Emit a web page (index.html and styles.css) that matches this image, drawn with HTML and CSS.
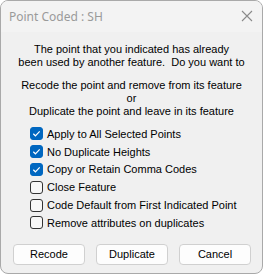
FILE: index.html
```html
<!DOCTYPE html>
<html>
<head>
<meta charset="utf-8">
<link rel="stylesheet" href="styles.css">
</head>
<body>
<div class="window">
  <div class="titlebar">
    <span class="title">Point Coded : SH</span>
    <svg class="close" width="12" height="12" viewBox="0 0 12 12"><path d="M1 1L11 11M11 1L1 11" stroke="#8a8a8a" stroke-width="1.1" fill="none"/></svg>
  </div>
  <div class="content">
    <p class="msg">The point that you indicated has already<br>been used by another feature.&nbsp; Do you want to</p>
    <p class="msg">Recode the point and remove from its feature<br>or<br>Duplicate the point and leave in its feature</p>
    <ul class="checks">
      <li><span class="box on"><svg width="13" height="13" viewBox="0 0 13 13"><path d="M3.3 6.8L5.4 8.8L9.7 4.4" stroke="#fff" stroke-width="1.2" fill="none"/></svg></span>Apply to All Selected Points</li>
      <li><span class="box on"><svg width="13" height="13" viewBox="0 0 13 13"><path d="M3.3 6.8L5.4 8.8L9.7 4.4" stroke="#fff" stroke-width="1.2" fill="none"/></svg></span>No Duplicate Heights</li>
      <li><span class="box on"><svg width="13" height="13" viewBox="0 0 13 13"><path d="M3.3 6.8L5.4 8.8L9.7 4.4" stroke="#fff" stroke-width="1.2" fill="none"/></svg></span>Copy or Retain Comma Codes</li>
      <li><span class="box"></span>Close Feature</li>
      <li><span class="box"></span>Code Default from First Indicated Point</li>
      <li><span class="box"></span>Remove attributes on duplicates</li>
    </ul>
    <div class="buttons">
      <button class="btn">Recode</button>
      <button class="btn">Duplicate</button>
      <button class="btn">Cancel</button>
    </div>
  </div>
</div>
</body>
</html>
```
FILE: styles.css
```css
html, body {
  margin: 0;
  padding: 0;
  background: #ffffff;
}
.window {
  width: 261px;
  height: 272px;
  border: 1px solid #a9a9a9;
  border-radius: 8px;
  overflow: hidden;
  background: #f0f0f0;
  display: flex;
  flex-direction: column;
}
.titlebar {
  height: 31px;
  background: #f3f3f3;
  display: flex;
  align-items: center;
  justify-content: space-between;
  padding: 0 9px 0 8px;
  flex-shrink: 0;
}
.title {
  font-family: "Noto Sans", "Open Sans", sans-serif;
  font-size: 12px;
  color: #9a9a9a;
  margin-top: -1px;
}
.close {
  margin-right: 0;
  margin-top: -1px;
}
.content {
  flex: 1;
  padding-top: 11px;
  font-family: "Liberation Sans", Arial, sans-serif;
  font-size: 11px;
  color: #000;
}
.msg {
  margin: 0 0 10px 0;
  text-align: center;
  line-height: 13px;
}
.checks {
  list-style: none;
  margin: 0;
  padding: 0 0 0 29px;
  margin-top: -3px;
}
.checks li {
  height: 17.8px;
  display: flex;
  align-items: center;
}
.box {
  width: 13px;
  height: 13px;
  box-sizing: border-box;
  border: 1px solid #333;
  border-radius: 3px;
  margin-right: 4px;
  background: #f7f7f7;
  display: flex;
}
.box.on {
  background: #0067c0;
  border-color: #0067c0;
}
.box.on svg {
  margin: -1px;
}
.buttons {
  display: flex;
  gap: 11px;
  padding-left: 12px;
  margin-top: 12px;
}
.btn {
  width: 72px;
  height: 21px;
  background: #fdfdfd;
  border: 1px solid #d0d0d0;
  border-radius: 4px;
  font-family: "Liberation Sans", Arial, sans-serif;
  font-size: 11px;
  color: #000;
  padding: 0;
}
```
